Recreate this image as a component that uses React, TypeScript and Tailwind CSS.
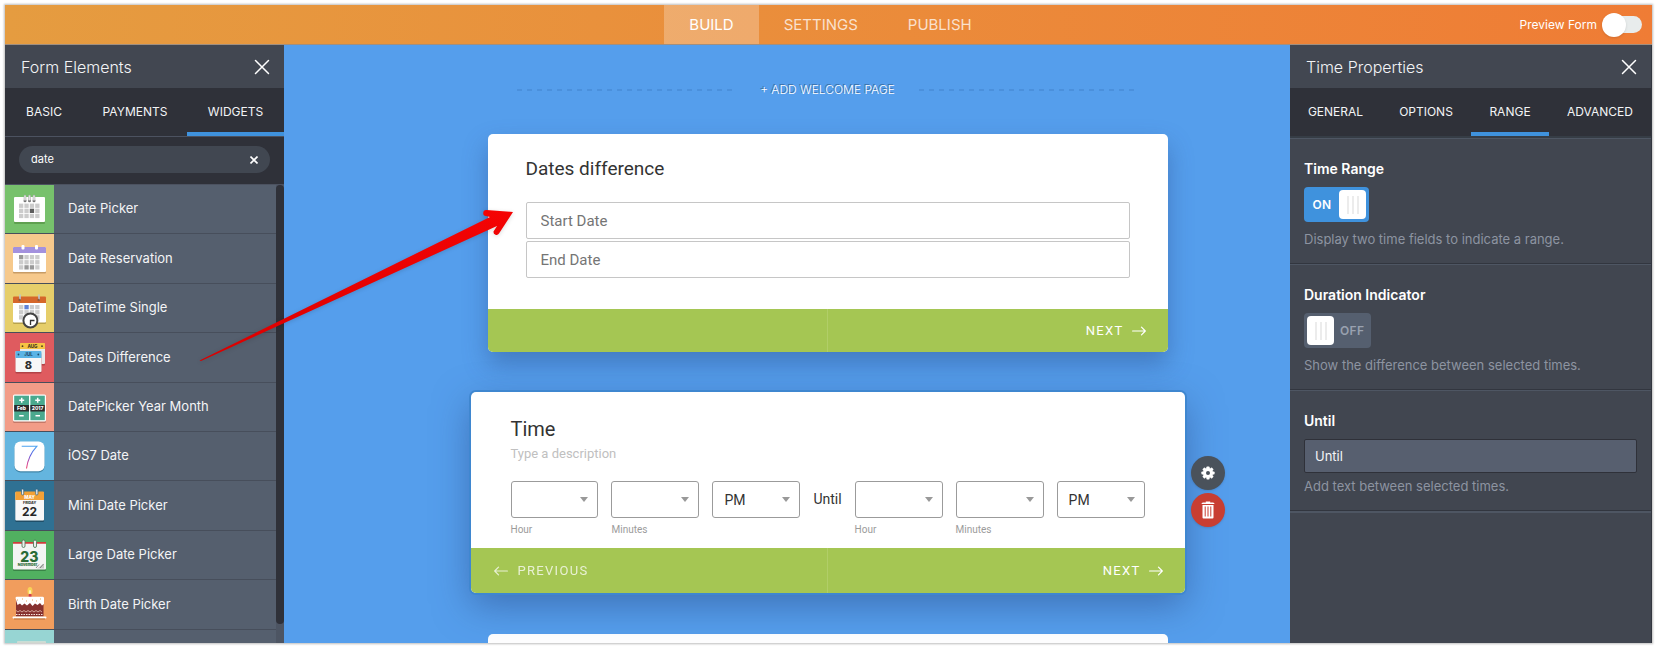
import { useState } from "react";
import type { ReactNode } from "react";
import clsx from "clsx";

const topTabs = ["BUILD", "SETTINGS", "PUBLISH"];
const elementTabs = [
  { title: "BASIC", width: "w-[78px]" },
  { title: "PAYMENTS", width: "flex-1" },
  { title: "WIDGETS", width: "w-[97px]" },
];
const propertyTabs = [
  { title: "GENERAL", width: "w-[91px]" },
  { title: "OPTIONS", width: "w-[90px]" },
  { title: "RANGE", width: "w-[78px]" },
  { title: "ADVANCED", width: "flex-1" },
];

const Cells = ({ x, y, marks }: { x: number; y: number; marks: Record<number, string> }) => (
  <>
    {Array.from({ length: 12 }, (_, i) => (
      <rect
        key={i}
        x={x + (i % 4) * 5.4}
        y={y + Math.floor(i / 4) * 5.1}
        width="4.3"
        height="4.3"
        fill={marks[i] ?? "#cccccc"}
      />
    ))}
  </>
);

const DatePickerIcon = () => (
  <>
    <rect x="9" y="14" width="31" height="25" rx="1" fill="#5fa050" />
    <rect x="9" y="12" width="31" height="25" rx="1" fill="#fff" />
    <Cells x={14} y={18.6} marks={{ 6: "#5d5d5d" }} />
    {[20, 24.5, 29].map((x) => (
      <g key={x}>
        <circle cx={x} cy="15.8" r="1.5" fill="#777" />
        <rect x={x - 1} y="10" width="2" height="5.5" rx="1" fill="#e4e4e4" stroke="#a5a5a5" strokeWidth=".5" />
      </g>
    ))}
  </>
);

const ReservationIcon = () => (
  <>
    <rect x="8" y="15" width="33" height="24.5" rx="1" fill="#c79c66" />
    <rect x="8" y="13" width="33" height="25" rx="1" fill="#fff" />
    <path d="M9 13h31a1 1 0 0 1 1 1v5H8v-5a1 1 0 0 1 1-1z" fill="#a391de" />
    <rect x="16.5" y="11" width="3" height="4.5" rx="1" fill="#fff" />
    <rect x="30" y="11" width="3" height="4.5" rx="1" fill="#fff" />
    <Cells x={14} y={21} marks={{ 0: "#999", 9: "#999", 10: "#999" }} />
  </>
);

const DateTimeIcon = () => (
  <>
    <rect x="8" y="15" width="33" height="25" rx="1" fill="#b9a34c" />
    <rect x="8" y="13" width="33" height="25.5" rx="1" fill="#fff" />
    <path d="M9 12.5h31a1 1 0 0 1 1 1V19H8v-5.500a1 1 0 0 1 1-1z" fill="#d5672a" />
    <path d="M15 10.500V16M34 10.500V16" stroke="#b9c6d0" strokeWidth="1.6" />
    <circle cx="14.600" cy="16" r="1.200" fill="#8d5b40" />
    <circle cx="33.600" cy="16" r="1.200" fill="#8d5b40" />
    <Cells x={14} y={21} marks={{ 1: "#5f82d9" }} />
    <circle cx="25.400" cy="36.500" r="7" fill="#fff" stroke="#444" strokeWidth="2" />
    <path d="M25.500 41v-4.500H29.500" fill="none" stroke="#333" strokeWidth="1.300" />
  </>
);

const DifferenceIcon = () => (
  <>
    <rect x="15" y="12" width="25" height="20.500" rx="1" fill="#b14347" />
    <rect x="15" y="10.500" width="25" height="20.500" rx="1" fill="#e9e9e9" />
    <path d="M16 10h23a1 1 0 0 1 1 1v5H15v-5a1 1 0 0 1 1-1z" fill="#f6c344" />
    <circle cx="17.500" cy="13.200" r=".9" fill="#4b4020" />
    <circle cx="37" cy="13.200" r=".9" fill="#4b4020" />
    <text x="27.500" y="15" textAnchor="middle" fontSize="4.500" fontWeight="800" fill="#4b4020">AUG</text>
    <rect x="10.500" y="20" width="26" height="20.500" rx="1" fill="#b14347" />
    <rect x="10.500" y="18" width="26" height="21" rx="1" fill="#f7f7f7" />
    <path d="M11.500 18h24a1 1 0 0 1 1 1v6h-26v-6a1 1 0 0 1 1-1z" fill="#5bb4e5" />
    <circle cx="13.500" cy="21.500" r=".9" fill="#1f4d6b" />
    <circle cx="33.300" cy="21.500" r=".9" fill="#1f4d6b" />
    <text x="23.500" y="23.300" textAnchor="middle" fontSize="4.500" fontWeight="800" fill="#1f4d6b">JUL</text>
    <text x="23.300" y="36" textAnchor="middle" fontSize="11" fontWeight="800" fill="#2d2d2d">8</text>
  </>
);

const YearMonthIcon = () => (
  <>
    <rect x="8" y="13" width="33" height="27" rx="1.500" fill="#c47868" />
    <rect x="8" y="11.500" width="33" height="27" rx="1.500" fill="#fff" />
    <rect x="9.200" y="12.700" width="14.800" height="24.500" fill="#4aa98e" />
    <rect x="25.400" y="12.700" width="14.400" height="24.500" fill="#4aa98e" />
    <rect x="9.200" y="22" width="14.800" height="6.500" fill="#2b2b2b" />
    <rect x="25.400" y="22" width="14.400" height="6.500" fill="#2b2b2b" />
    <path d="M14.200 17.300h5M16.700 14.800v5M30.200 17.300h5M32.700 14.800v5M14.200 32.800h4.500M30.500 32.800H35" stroke="#fff" strokeWidth="1.500" />
    <text x="16.500" y="27" textAnchor="middle" fontSize="5" fontWeight="800" fill="#fff">Feb</text>
    <text x="32.600" y="27" textAnchor="middle" fontSize="5" fontWeight="800" fill="#fff">2017</text>
  </>
);

const Ios7Icon = () => (
  <>
    <defs>
      <linearGradient id="seven" x1="0" y1="0" x2="0" y2="1">
        <stop offset="0" stopColor="#4aa3f0" />
        <stop offset=".4" stopColor="#5a5ee0" />
        <stop offset=".7" stopColor="#c34aa8" />
        <stop offset="1" stopColor="#f2426b" />
      </linearGradient>
    </defs>
    <rect x="9.500" y="11" width="30" height="29.500" rx="6" fill="#4186a8" />
    <rect x="9.500" y="9.500" width="30" height="29.800" rx="6" fill="#fff" />
    <path d="M16.700 14.300H31.800C26.500 20 22.500 28.500 21.500 36.500" fill="none" stroke="url(#seven)" strokeWidth="1.100" />
  </>
);

const MiniIcon = () => (
  <>
    <rect x="10.300" y="13" width="28.700" height="28" rx="1" fill="#1f4e68" />
    <rect x="10.300" y="11" width="28.700" height="28.500" rx="1" fill="#f8f8f8" />
    <path d="M11.300 10.500H38a1 1 0 0 1 1 1v7.500H10.300v-7.500a1 1 0 0 1 1-1z" fill="#f2a136" />
    <rect x="16.500" y="8" width="2.200" height="6" rx="1.100" fill="#e8eef2" stroke="#2c5f7b" strokeWidth=".7" />
    <rect x="30.700" y="8" width="2.200" height="6" rx="1.100" fill="#e8eef2" stroke="#2c5f7b" strokeWidth=".7" />
    <text x="24.600" y="17.600" textAnchor="middle" fontSize="4.500" fontWeight="800" fill="#fff">MAY</text>
    <text x="24.600" y="23.300" textAnchor="middle" fontSize="3.600" fontWeight="800" fill="#333">FRIDAY</text>
    <text x="24.600" y="34.700" textAnchor="middle" fontSize="12" fontWeight="700" fill="#262626">22</text>
  </>
);

const LargeIcon = () => (
  <>
    <rect x="8" y="13" width="33" height="27" rx="1" fill="#3a8447" />
    <rect x="8" y="11" width="33" height="27.500" rx="1" fill="#f3f4f3" />
    <path d="M8 11h33v1.800H8z" fill="#cf3b3b" />
    <path d="M32 37.500l7-5v5z" fill="#c9cbc9" />
    <path d="M31 37l3-3.500M35 37l3.500-4" stroke="#6f746f" strokeWidth=".8" />
    <text x="24.300" y="30.500" textAnchor="middle" fontSize="14" fontWeight="800" fill="#2a6b37">23</text>
    <text x="22.500" y="35" textAnchor="middle" fontSize="3.800" fontWeight="800" fill="#2a6b37">November</text>
    <rect x="17" y="9" width="3" height="7.500" rx="1.500" fill="#eee" stroke="#547b5a" strokeWidth=".9" />
    <rect x="28.500" y="9" width="3" height="7.500" rx="1.500" fill="#eee" stroke="#547b5a" strokeWidth=".9" />
  </>
);

const CakeIcon = () => (
  <>
    <ellipse cx="25" cy="11" rx="2.500" ry="4" fill="#f8d257" />
    <ellipse cx="25" cy="12" rx="1.200" ry="2" fill="#fff3b5" />
    <rect x="23.700" y="14" width="2.800" height="5.500" fill="#d3404d" />
    <rect x="11" y="20" width="27.500" height="16.500" fill="#86312f" />
    <path d="M10.500 18a1.500 1.500 0 0 1 1.500-1.300h25.500a1.500 1.500 0 0 1 1.500 1.300v6l-2 1.500-2-2.500-2.500 2-2.500-1.500-2.500 2.500-2.500-3-3 2.500-2.500-2-2.500 2-2-2-2.500 1.500z" fill="#fff" />
    <path d="M12 20h1M17 19h1M21 21h1M27 20h1M31 21h1M35 19h1" stroke="#e9a25c" />
    <path d="M11 30.500l2 1.500 2-1.500 2 1.500 2-1.500 2 1.500 2-1.500 2 1.500 2-1.500 2 1.500 2-1.500 2 1.500 2-1.500 2 1.500" fill="none" stroke="#e7c0b4" strokeWidth=".8" />
    <path d="M11 34.500h27.500" stroke="#f6e4dc" strokeWidth="1.200" strokeDasharray="1.500 1" />
    <rect x="7.500" y="36.500" width="34" height="2" rx="1" fill="#fff" />
    <rect x="9" y="38.500" width="31" height="1" fill="#b9703c" />
  </>
);

const CalendarTopIcon = () => (
  <>
    <rect x="12" y="11.500" width="29" height="25" rx="1" fill="#f0f0e6" />
    <rect x="12" y="11.500" width="29" height="1.500" fill="#cfd8d0" />
  </>
);

const widgets: { title: string; tile: string; icon: ReactNode }[] = [
  { title: "Date Picker", tile: "bg-[#77c16c]", icon: <DatePickerIcon /> },
  { title: "Date Reservation", tile: "bg-[#f6c98c]", icon: <ReservationIcon /> },
  { title: "DateTime Single", tile: "bg-[#e6ce6a]", icon: <DateTimeIcon /> },
  { title: "Dates Difference", tile: "bg-[#df5b5f]", icon: <DifferenceIcon /> },
  { title: "DatePicker Year Month", tile: "bg-[#f29c87]", icon: <YearMonthIcon /> },
  { title: "iOS7 Date", tile: "bg-[#64b5df]", icon: <Ios7Icon /> },
  { title: "Mini Date Picker", tile: "bg-[#2f7193]", icon: <MiniIcon /> },
  { title: "Large Date Picker", tile: "bg-[#51b060]", icon: <LargeIcon /> },
  { title: "Birth Date Picker", tile: "bg-[#f19d5d]", icon: <CakeIcon /> },
  { title: "", tile: "bg-[#97d5d3]", icon: <CalendarTopIcon /> },
];

const CloseIcon = () => (
  <svg className="size-4" viewBox="0 0 16 16" stroke="#fff" strokeWidth="1.500" strokeLinecap="round">
    <path d="M1.500 1.500l13 13M14.500 1.500l-13 13" />
  </svg>
);

const ArrowIcon = ({ left }: { left?: boolean }) => (
  <svg
    className={clsx("w-3.5 h-2.5", left && "rotate-180")}
    viewBox="0 0 14 10"
    fill="none"
    stroke="currentColor"
    strokeWidth="1.200"
    strokeLinecap="round"
    strokeLinejoin="round"
  >
    <path d="M.6 5h12.600M9.500 1.200L13.300 5 9.500 8.800" />
  </svg>
);

const PanelHeader = ({ title }: { title: string }) => (
  <div className="flex h-[43px] shrink-0 items-center justify-between bg-[#424751] pr-3.5 pl-4">
    <h2 className="text-base font-light text-gray-100">{title}</h2>
    <button aria-label={`Close ${title}`} className="cursor-pointer">
      <CloseIcon />
    </button>
  </div>
);

const PanelTabs = ({ tabs, active }: { tabs: { title: string; width: string }[]; active: string }) => (
  <nav className="flex h-12 shrink-0 bg-[#2f3139]">
    {tabs.map((tab) => (
      <button
        key={tab.title}
        className={clsx(
          "cursor-pointer border-y-4 border-t-transparent text-xs text-gray-100",
          tab.width,
          tab.title === active ? "border-b-[#3f92dd]" : "border-b-transparent"
        )}
      >
        {tab.title}
      </button>
    ))}
  </nav>
);

const Switch = ({ id, on, onChange }: { id: string; on: boolean; onChange: () => void }) => (
  <span
    className={clsx(
      "relative flex h-[35px] items-center gap-1.5 rounded p-[3px]",
      on ? "w-[65px] bg-[#3f92dd]" : "w-[67px] flex-row-reverse bg-[#555f6f]"
    )}
  >
    <span
      className={clsx(
        "flex-1 text-xs font-semibold tracking-wide",
        on ? "pl-1 text-center text-white" : "text-gray-400"
      )}
    >
      {on ? "ON" : "OFF"}
    </span>
    <span className="flex h-[29px] w-[27px] items-center justify-center gap-[3px] rounded-sm bg-white">
      <i className="h-[18px] w-0.5 bg-[#ececec]" />
      <i className="h-[18px] w-0.5 bg-[#ececec]" />
      <i className="h-[18px] w-0.5 bg-[#ececec]" />
    </span>
    <input
      id={id}
      type="checkbox"
      checked={on}
      onChange={onChange}
      className="absolute inset-0 size-full cursor-pointer opacity-0"
    />
  </span>
);

type PropertyProps = { id: string; title: string; hint: string; tight?: boolean; children: ReactNode };

const Property = ({ id, title, hint, tight, children }: PropertyProps) => (
  <section className="border-t border-b border-t-[#4e5663] border-b-[#32363f] px-3.5 pt-[18px] pb-[15px]">
    <label htmlFor={id} className="block text-sm leading-6 font-semibold text-white">
      {title}
    </label>
    <div className="mt-1.5">{children}</div>
    <p className={clsx("text-[13px] leading-[18px] text-[#8d94a1]", tight ? "mt-1" : "mt-2")}>{hint}</p>
  </section>
);

const TimeSelect = ({ id, label, value }: { id: string; label: string; value?: string }) => (
  <div className="flex-1">
    <div className="relative">
      <select
        id={id}
        aria-label={label}
        defaultValue={value ?? ""}
        className="block h-[37px] w-full appearance-none rounded-[3px] border border-[#9b9b9b] bg-white pl-[11px] font-[Roboto,sans-serif] text-sm text-[#333]"
      >
        {value ? (
          <>
            <option>AM</option>
            <option>PM</option>
          </>
        ) : (
          <option value="" />
        )}
      </select>
      <svg className="pointer-events-none absolute top-4 right-2.5 h-[5px] w-2" viewBox="0 0 8 5">
        <path d="M0 0h8L4 5z" fill="#999" />
      </svg>
    </div>
    <label htmlFor={id} className="mt-1.5 block h-3 text-[10px] leading-3 text-[#9b9b9b]">
      {value ? "" : label}
    </label>
  </div>
);

const CardFooter = ({ previous }: { previous?: boolean }) => (
  <footer className="grid flex-1 grid-cols-2 rounded-b-[5px] bg-[#a5c653] text-[13px] text-white">
    <div className="flex items-center border-r border-[#b1ce68] pl-[23px]">
      {previous && (
        <button className="flex cursor-pointer items-center gap-2.5 tracking-widest opacity-75">
          <ArrowIcon left /> PREVIOUS
        </button>
      )}
    </div>
    <div className="flex items-center justify-end pr-[22px]">
      <button className="flex cursor-pointer items-center gap-2 tracking-widest">
        NEXT <ArrowIcon />
      </button>
    </div>
  </footer>
);

const ElementsPanel = () => {
  const [query, setQuery] = useState("date");

  return (
    <aside className="flex w-[279px] shrink-0 flex-col bg-[#2f3139]">
      <PanelHeader title="Form Elements" />
      <PanelTabs tabs={elementTabs} active="WIDGETS" />
      <div className="h-[49px] shrink-0 border-y border-[#4c5260] px-3.5 pt-[9px]">
        <div className="flex h-[27px] items-center rounded-full bg-[#414751] px-3">
          <input
            aria-label="Search widgets"
            value={query}
            onChange={(e) => setQuery(e.target.value)}
            className="min-w-0 flex-1 text-[11px] text-white outline-none"
          />
          <button aria-label="Clear search" onClick={() => setQuery("")} className="cursor-pointer">
            <svg className="size-2" viewBox="0 0 8 8" stroke="#fff" strokeWidth="1.600">
              <path d="M.5.5l7 7M7.500.5l-7 7" />
            </svg>
          </button>
        </div>
      </div>
      <div className="flex min-h-0 flex-1 overflow-hidden">
        <ul className="flex h-[494px] flex-1 flex-col bg-[#555f6e]">
          {widgets.map((widget, index) => (
            <li key={index} className="flex min-h-0 flex-1 items-stretch overflow-hidden border-b border-[#474e5b]">
              <span className={clsx("w-[49px]", widget.tile)}>
                <svg className="size-[49px] font-[Inter,sans-serif]" viewBox="0 0 49 49">
                  {widget.icon}
                </svg>
              </span>
              <span className="self-center pl-3.5 text-[13px] text-gray-100">{widget.title}</span>
            </li>
          ))}
        </ul>
        <div className="w-2 bg-[#4d5563] pb-[19px]">
          <div className="h-full rounded-full bg-[#2f3139]" />
        </div>
      </div>
    </aside>
  );
};

const PropertiesPanel = () => {
  const [range, setRange] = useState(true);
  const [duration, setDuration] = useState(false);

  return (
    <aside className="flex w-[362px] shrink-0 flex-col border-r border-[#32363f] bg-[#414650]">
      <PanelHeader title="Time Properties" />
      <PanelTabs tabs={propertyTabs} active="RANGE" />
      <div className="border-t-2 border-[#363d46]">
        <Property id="range" title="Time Range" hint="Display two time fields to indicate a range.">
          <Switch id="range" on={range} onChange={() => setRange(!range)} />
        </Property>
        <Property id="duration" title="Duration Indicator" hint="Show the difference between selected times.">
          <Switch id="duration" on={duration} onChange={() => setDuration(!duration)} />
        </Property>
        <Property id="until" title="Until" hint="Add text between selected times." tight>
          <input
            id="until"
            defaultValue="Until"
            className="block h-[34px] w-full rounded-xs border border-[#2f3139] bg-[#575f6f] px-2.5 text-[13px] text-gray-100"
          />
        </Property>
        <div className="border-t-2 border-[#4e5663]" />
      </div>
    </aside>
  );
};

const FormCanvas = () => (
  <main className="flex min-w-0 flex-1 flex-col items-center overflow-hidden bg-[#559eec] pl-[81px] font-[Roboto,sans-serif]">
    <div className="mt-[37px] flex h-4 w-[622px] items-center gap-6">
      <span className="h-0.5 flex-1 bg-[repeating-linear-gradient(90deg,#4b90dc_0_5px,transparent_5px_10px)]" />
      <button className="cursor-pointer font-[Inter,sans-serif] text-xs font-light text-white [text-shadow:-1px_-1px_0_#3b6ea6]">
        + ADD WELCOME PAGE
      </button>
      <span className="h-0.5 flex-1 bg-[repeating-linear-gradient(90deg,#4b90dc_0_5px,transparent_5px_10px)]" />
    </div>

    <section className="mt-9 flex h-[218px] w-[680px] shrink-0 flex-col rounded-[5px] bg-white shadow-[0_12px_24px_rgba(40,70,130,0.4)]">
      <div className="flex h-[175px] flex-col gap-0.5 px-[38px] pt-[21px]">
        <h3 className="mb-[17px] text-[19px] leading-7 text-[#333]">Dates difference</h3>
        <input
          aria-label="Start Date"
          placeholder="Start Date"
          className="h-[37px] shrink-0 rounded-xs border border-[#c6c6c6] px-3.5 text-[15px] placeholder:text-[#757575]"
        />
        <input
          aria-label="End Date"
          placeholder="End Date"
          className="h-[37px] shrink-0 rounded-xs border border-[#c6c6c6] px-3.5 text-[15px] placeholder:text-[#757575]"
        />
      </div>
      <CardFooter />
    </section>

    <section className="relative mt-10 flex h-[201px] w-[714px] shrink-0 flex-col rounded-[5px] bg-white shadow-[0_0_0_2px_#3f87d0,0_12px_36px_rgba(40,70,130,0.5)]">
      <div className="h-[156px] px-10 pt-6">
        <h3 className="text-xl leading-[26px] text-[#333]">Time</h3>
        <p className="mt-0.5 text-[13px] leading-5 text-[#c0c0c0]">Type a description</p>
        <div className="mt-[17px] flex gap-[13px]">
          <TimeSelect id="hour" label="Hour" />
          <TimeSelect id="minutes" label="Minutes" />
          <TimeSelect id="period" label="AM/PM" value="PM" />
          <span className="pt-2 text-sm text-[#333]">Until</span>
          <TimeSelect id="until-hour" label="Hour" />
          <TimeSelect id="until-minutes" label="Minutes" />
          <TimeSelect id="until-period" label="AM/PM" value="PM" />
        </div>
      </div>
      <CardFooter previous />

      <div className="absolute top-16 left-full ml-1.5 flex flex-col gap-[3px]">
        <button
          aria-label="Settings"
          className="flex size-[34px] cursor-pointer items-center justify-center rounded-full bg-[#4a525b] shadow"
        >
          <svg className="size-[14px]" viewBox="-7 -7 14 14" fill="#fff">
            {[0, 45, 90, 135].map((angle) => (
              <rect key={angle} x="-1.600" y="-6.600" width="3.200" height="13.200" rx=".8" transform={`rotate(${angle})`} />
            ))}
            <circle r="5" />
            <circle r="2" fill="#4a525b" />
          </svg>
        </button>
        <button
          aria-label="Delete"
          className="flex size-[34px] cursor-pointer items-center justify-center rounded-full bg-[#c83e32] shadow"
        >
          <svg className="h-[18px] w-[14px]" viewBox="0 0 14 18" fill="#fff">
            <path d="M.5 3a1.500 1.500 0 0 1 1.500-1.500h2.800V.6h4.400v.9H12A1.500 1.500 0 0 1 13.500 3z" />
            <path d="M1.500 4h11v12.500a1 1 0 0 1-1 1h-9a1 1 0 0 1-1-1z" />
            <path d="M4.200 5.500v10M7 5.500v10M9.800 5.500v10" stroke="#c83e32" strokeWidth="1" />
          </svg>
        </button>
      </div>
    </section>

    <section className="mt-[41px] h-[100px] w-[680px] shrink-0 rounded-[5px] bg-white" />
  </main>
);

const App = () => {
  const [tab, setTab] = useState("BUILD");

  return (
    <div className="relative h-screen bg-white p-[5px] font-[Inter,sans-serif]">
      <div className="flex h-full flex-col overflow-hidden shadow-[0_0_2px_1px_#bdbdbd]">
        <header className="grid h-10 shrink-0 grid-cols-[1fr_auto_1fr] border-b border-[#a08f80] bg-linear-to-r from-[#e59c40] to-[#ef7c35]">
          <nav className="col-start-2 flex pl-1">
            {topTabs.map((title) => (
              <button
                key={title}
                onClick={() => setTab(title)}
                className={clsx(
                  "cursor-pointer px-[25px] pt-0.5 text-[15px]",
                  title === tab ? "bg-white/25 text-white" : "text-white/75"
                )}
              >
                {title}
              </button>
            ))}
          </nav>
          <label className="flex items-center justify-end gap-[5px] pr-2.5 text-xs text-white">
            Preview Form
            <span className="relative flex h-6 w-10 items-center">
              <input
                type="checkbox"
                className="ml-auto h-[17px] w-8 cursor-pointer appearance-none rounded-full bg-[#e8ecec]"
              />
              <span className="pointer-events-none absolute left-0 size-6 rounded-full bg-white shadow" />
            </span>
          </label>
        </header>
        <div className="flex min-h-0 flex-1">
          <ElementsPanel />
          <FormCanvas />
          <PropertiesPanel />
        </div>
      </div>

      <svg
        className="pointer-events-none absolute top-[208px] left-[198px] h-[156px] w-[318px] drop-shadow-sm"
        viewBox="0 0 318 156"
      >
        <defs>
          <linearGradient id="pointer" x1="0" y1="0" x2=".1" y2="1">
            <stop offset="0" stopColor="#f80404" />
            <stop offset="1" stopColor="#d90000" />
          </linearGradient>
        </defs>
        <path
          d="M1.500 152.500L292 9 288 8a2.800 2.800 0 0 1 .5-6L315 4 301 25.500a3 3 0 0 1-5.500-2L299 18 3 153z"
          fill="url(#pointer)"
        />
      </svg>
    </div>
  );
};

export default App;
